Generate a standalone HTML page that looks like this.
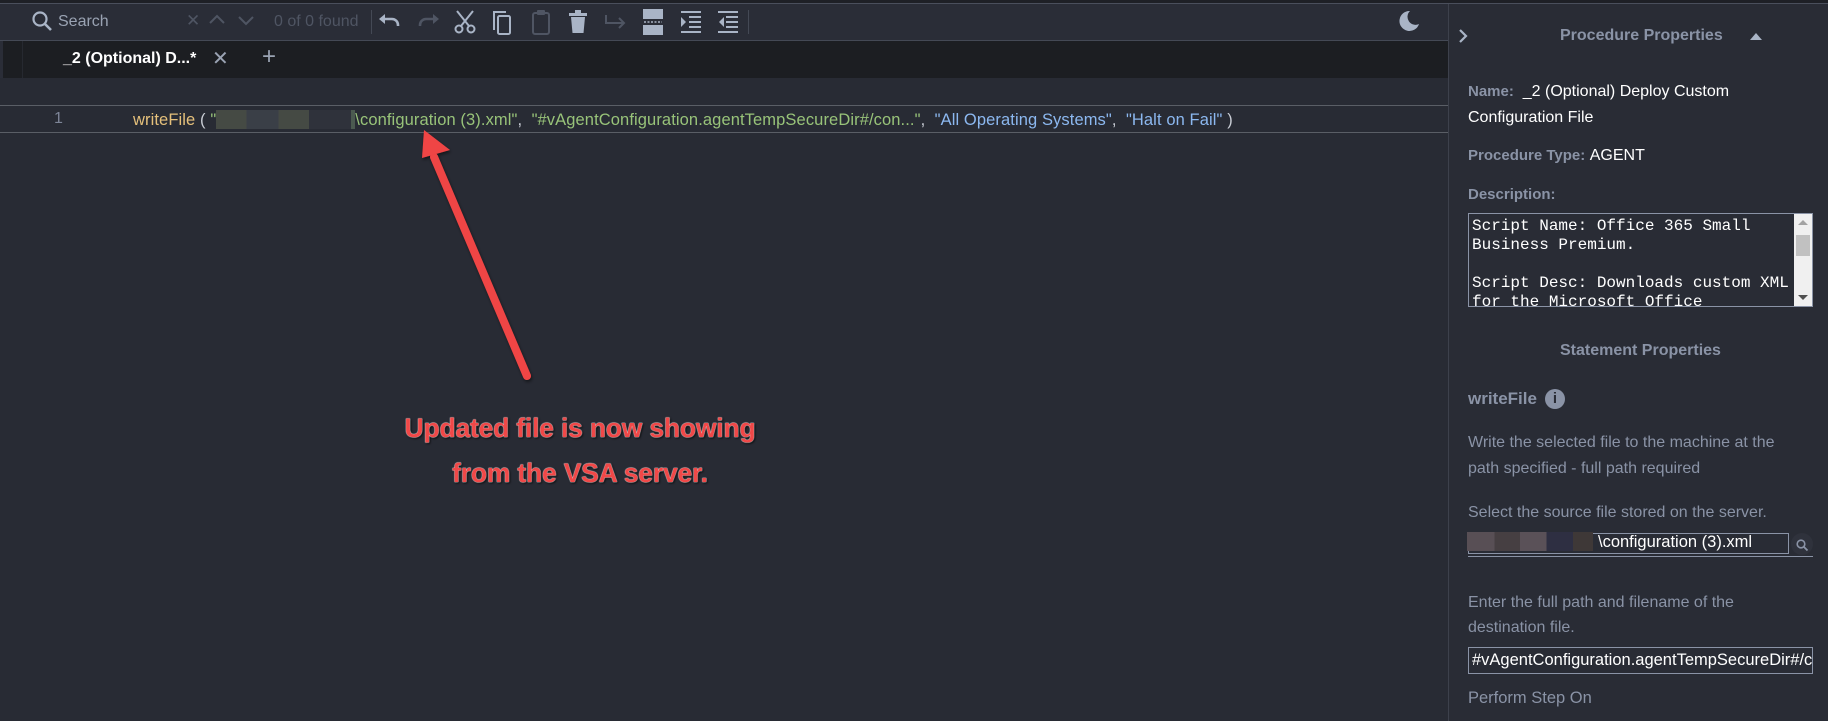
<!DOCTYPE html>
<html><head><meta charset="utf-8">
<style>
*{margin:0;padding:0;box-sizing:border-box}
body{width:1828px;height:721px;overflow:hidden;background:#282b34;font-family:"Liberation Sans",sans-serif;position:relative;color:#fff}
.a{position:absolute;white-space:nowrap}
.lbl{color:#8a93a6;font-weight:bold;font-size:15px}
.txt{color:#8a93a6;font-size:16px}
.val{color:#fff;font-size:16px}
svg.i{position:absolute}
</style></head><body>
<div class="a" style="left:0;top:0;width:1828px;height:3px;background:#1e2026"></div>
<div class="a" style="left:0;top:3px;width:1828px;height:1px;background:#4a4f5c"></div>
<div class="a" style="left:0;top:4px;width:1448px;height:36px;background:#2a2d37"></div>
<div class="a" style="left:0;top:40px;width:1448px;height:1px;background:#444955"></div>
<svg class="i" style="left:30px;top:9px" width="24" height="24" viewBox="0 0 24 24"><circle cx="10" cy="10" r="6.5" fill="none" stroke="#a9b4c6" stroke-width="2.2"/><path d="M15 15l6 6" stroke="#a9b4c6" stroke-width="2.6"/></svg>
<div class="a" style="left:58px;top:13px;font-size:16px;color:#9aa3b3">Search</div>
<div class="a" style="left:186px;top:11px;font-size:17px;color:#4f5563">✕</div>
<svg class="i" style="left:207px;top:12px" width="20" height="16"><path d="M3 11l7-7 7 7" fill="none" stroke="#4f5563" stroke-width="2"/></svg>
<svg class="i" style="left:236px;top:12px" width="20" height="16"><path d="M3 5l7 7 7-7" fill="none" stroke="#4f5563" stroke-width="2"/></svg>
<div class="a" style="left:274px;top:13px;font-size:16px;color:#4f5563">0 of 0 found</div>
<div class="a" style="left:371px;top:10px;width:1px;height:24px;background:#444955"></div>
<svg class="i" style="left:378px;top:10px" width="24" height="24" viewBox="0 0 24 24"><path d="M5 9h9a6 6 0 0 1 6 6v1" fill="none" stroke="#a9b4c6" stroke-width="2.6"/><path d="M1 9l6-5v10z" fill="#a9b4c6"/></svg>
<svg class="i" style="left:416px;top:10px" width="24" height="24" viewBox="0 0 24 24"><path d="M19 9h-9a6 6 0 0 0-6 6v1" fill="none" stroke="#4f5563" stroke-width="2.6"/><path d="M23 9l-6-5v10z" fill="#4f5563"/></svg>
<svg class="i" style="left:453px;top:9px" width="24" height="26" viewBox="0 0 24 26"><circle cx="6" cy="20" r="3.5" fill="none" stroke="#a9b4c6" stroke-width="2"/><circle cx="18" cy="20" r="3.5" fill="none" stroke="#a9b4c6" stroke-width="2"/><path d="M8 17L20 2M16 17L4 2" stroke="#a9b4c6" stroke-width="2"/></svg>
<svg class="i" style="left:490px;top:8px" width="24" height="28" viewBox="0 0 24 28"><path d="M4 22V4h12" fill="none" stroke="#a9b4c6" stroke-width="2"/><rect x="8" y="8" width="12" height="18" rx="1.5" fill="none" stroke="#a9b4c6" stroke-width="2"/></svg>
<svg class="i" style="left:529px;top:8px" width="24" height="28" viewBox="0 0 24 28"><rect x="4" y="5" width="16" height="21" rx="2" fill="none" stroke="#4f5563" stroke-width="2"/><rect x="8" y="2" width="8" height="5" rx="1" fill="#4f5563"/></svg>
<svg class="i" style="left:567px;top:10px" width="22" height="24" viewBox="0 0 22 24"><rect x="2" y="3" width="18" height="3" fill="#a9b4c6"/><rect x="8" y="0" width="6" height="3" fill="#a9b4c6"/><path d="M4 7h14l-1.5 16h-11z" fill="#a9b4c6"/></svg>
<svg class="i" style="left:604px;top:11px" width="24" height="22" viewBox="0 0 24 22"><path d="M2 4v8h18" fill="none" stroke="#4f5563" stroke-width="2"/><path d="M15 7l5 5-5 5" fill="none" stroke="#4f5563" stroke-width="2"/></svg>
<svg class="i" style="left:643px;top:9px" width="20" height="26" viewBox="0 0 20 26"><rect x="0" y="0" width="20" height="10" fill="#a9b4c6"/><rect x="0" y="16" width="20" height="10" fill="#a9b4c6"/><path d="M1 13h18" stroke="#a9b4c6" stroke-width="1.5" stroke-dasharray="2 1.5"/></svg>
<svg class="i" style="left:681px;top:10px" width="20" height="24" viewBox="0 0 20 24"><path d="M0 2h20M8 7h12M8 12h12M8 17h12M0 22h20" stroke="#a9b4c6" stroke-width="2"/><path d="M0 7l5 5-5 5z" fill="#a9b4c6"/></svg>
<svg class="i" style="left:718px;top:10px" width="20" height="24" viewBox="0 0 20 24"><path d="M0 2h20M8 7h12M8 12h12M8 17h12M0 22h20" stroke="#a9b4c6" stroke-width="2"/><path d="M6 7l-5 5 5 5z" fill="#a9b4c6"/></svg>
<div class="a" style="left:748px;top:10px;width:1px;height:24px;background:#444955"></div>
<svg class="i" style="left:1398px;top:10px" width="22" height="22" viewBox="0 0 22 22"><path d="M12 1a10 10 0 1 0 9 13A8 8 0 0 1 12 1z" fill="#a9b4c6"/></svg>
<div class="a" style="left:0;top:41px;width:1448px;height:37px;background:#1c1e22"></div>
<div class="a" style="left:0;top:41px;width:3px;height:37px;background:#2a2d37"></div>
<div class="a" style="left:22px;top:41px;width:229px;height:37px;background:#1c1e22;border-left:1px solid #262930"></div>
<div class="a" style="left:63px;top:50px;font-size:16px;font-weight:bold;color:#fff">_2 (Optional) D...*</div>
<div class="a" style="left:212px;top:46px;font-size:20px;color:#9aa3b3">✕</div>
<div class="a" style="left:262px;top:43px;font-size:24px;color:#9aa3b3">+</div>
<div class="a" style="left:0;top:105px;width:1448px;height:1px;background:#5a5e66"></div>
<div class="a" style="left:0;top:132px;width:1448px;height:1px;background:#5a5e66"></div>
<div class="a" style="left:54px;top:110px;font-size:16px;color:#7d8597">1</div>
<div class="a" style="left:133px;top:110px;font-size:16.5px;letter-spacing:0.1px;color:#e5c07b">writeFile <span style="color:#c8ccd4">(</span> <span style="color:#98c379">"</span><span style="display:inline-block;width:139px;height:19px;vertical-align:-4px;background:linear-gradient(90deg,#454a44 0 22%,#3a3f47 22% 45%,#454a44 45% 67%,#2f323b 67% 97%,#4b5a50 97%)"></span><span style="color:#98c379">\configuration (3).xml"</span><span style="color:#c8ccd4">,</span>&nbsp; <span style="color:#98c379">"#vAgentConfiguration.agentTempSecureDir#/con..."</span><span style="color:#c8ccd4">,</span>&nbsp; <span style="color:#8cb8f0">"All Operating Systems"</span><span style="color:#c8ccd4">,</span>&nbsp; <span style="color:#8cb8f0">"Halt on Fail"</span> <span style="color:#c8ccd4">)</span></div>
<svg class="i" style="left:0;top:0" width="1448" height="721"><defs><filter id="sh"><feDropShadow dx="1" dy="2" stdDeviation="1.5" flood-color="#000" flood-opacity="0.5"/></filter></defs><g filter="url(#sh)"><path d="M527 376L434 157" stroke="#ef4444" stroke-width="8" stroke-linecap="round"/><path d="M424 130L450 150L422 158Z" fill="#ef4444"/></g></svg>
<div class="a" style="left:330px;top:406px;width:500px;text-align:center;font-size:26.5px;font-weight:bold;color:#f04848;line-height:45px;white-space:normal;text-shadow:0 0 1px #fff,0 0 1px #fff,1px 1px 2px #000;letter-spacing:-0.2px">Updated file is now showing<br>from the VSA server.</div>
<div class="a" style="left:1448px;top:4px;width:1px;height:717px;background:#3d414c"></div>
<div class="a" style="left:1449px;top:4px;width:379px;height:717px;background:#292c35"></div>
<svg class="i" style="left:1457px;top:28px" width="14" height="16"><path d="M3 2l6 6-6 6" fill="none" stroke="#a9b4c6" stroke-width="2.2"/></svg>
<div class="a" style="left:1560px;top:27px;font-size:16px;font-weight:bold;color:#8a93a6">Procedure Properties</div>
<svg class="i" style="left:1748px;top:30px" width="16" height="12"><path d="M2 10l6-7 6 7z" fill="#a9b4c6"/></svg>
<div class="a" style="left:1468px;top:83px"><span class="lbl">Name:</span> <span class="val">&nbsp;_2 (Optional) Deploy Custom</span></div>
<div class="a val" style="left:1468px;top:109px">Configuration File</div>
<div class="a" style="left:1468px;top:147px"><span class="lbl">Procedure Type:</span> <span class="val">AGENT</span></div>
<div class="a lbl" style="left:1468px;top:186px">Description:</div>
<div class="a" style="left:1468px;top:213px;width:345px;height:94px;border:1px solid #8a93a6;background:#292c35;overflow:hidden">
<div style="position:absolute;left:3px;top:3px;font-family:'Liberation Mono',monospace;font-size:16px;line-height:19px;color:#fff;white-space:pre">Script Name: Office 365 Small
Business Premium.

Script Desc: Downloads custom XML
for the Microsoft Office</div>
<div style="position:absolute;right:0;top:0;width:18px;height:92px;background:#f0f0f0"></div>
<div style="position:absolute;right:2px;top:21px;width:14px;height:21px;background:#c1c1c1"></div>
<div style="position:absolute;right:4px;top:6px;border:5px solid transparent;border-bottom:5px solid #a3a3a3;border-top:0"></div>
<div style="position:absolute;right:4px;bottom:6px;border:5px solid transparent;border-top:5px solid #505050;border-bottom:0"></div>
</div>
<div class="a" style="left:1560px;top:342px;font-size:16px;font-weight:bold;color:#8a93a6">Statement Properties</div>
<div class="a" style="left:1468px;top:389px;font-size:17px;font-weight:bold;color:#8a93a6">writeFile</div>
<div class="a" style="left:1545px;top:389px;width:20px;height:20px;border-radius:50%;background:#8a93a6;color:#292c35;font-weight:bold;font-size:15px;text-align:center;line-height:20px">i</div>
<div class="a txt" style="left:1468px;top:434px">Write the selected file to the machine at the</div>
<div class="a txt" style="left:1468px;top:460px">path specified - full path required</div>
<div class="a txt" style="left:1468px;top:504px">Select the source file stored on the server.</div>
<div class="a" style="left:1468px;top:533px;width:321px;height:21px;border:1px solid #8a93a6"></div>
<div class="a" style="left:1467px;top:532px;width:126px;height:19px;background:linear-gradient(90deg,#584f55 0 22%,#463f42 22% 42%,#5a5158 42% 63%,#2e2f42 63% 84%,#3e3837 84%)"></div>
<div class="a" style="left:1598px;top:533px;font-size:16.5px;color:#fff">\configuration (3).xml</div>
<div class="a" style="left:1468px;top:556px;width:345px;height:1px;background:#8a93a6"></div>
<div class="a" style="left:1791px;top:533px;width:22px;height:22px;border-radius:50%;background:#2f323c"></div>
<svg class="i" style="left:1795px;top:538px" width="14" height="14"><circle cx="6" cy="6" r="3.8" fill="none" stroke="#8a93a6" stroke-width="1.6"/><path d="M9 9l3.5 3.5" stroke="#8a93a6" stroke-width="1.8"/></svg>
<div class="a txt" style="left:1468px;top:594px">Enter the full path and filename of the</div>
<div class="a txt" style="left:1468px;top:619px">destination file.</div>
<div class="a" style="left:1468px;top:647px;width:345px;height:27px;border:1px solid #8a93a6;overflow:hidden"><div style="position:absolute;left:3px;top:3px;font-size:16.5px;color:#fff;white-space:nowrap">#vAgentConfiguration.agentTempSecureDir#/configuration.xml</div></div>
<div class="a txt" style="left:1468px;top:689px;font-size:16.5px">Perform Step On</div>
</body></html>
